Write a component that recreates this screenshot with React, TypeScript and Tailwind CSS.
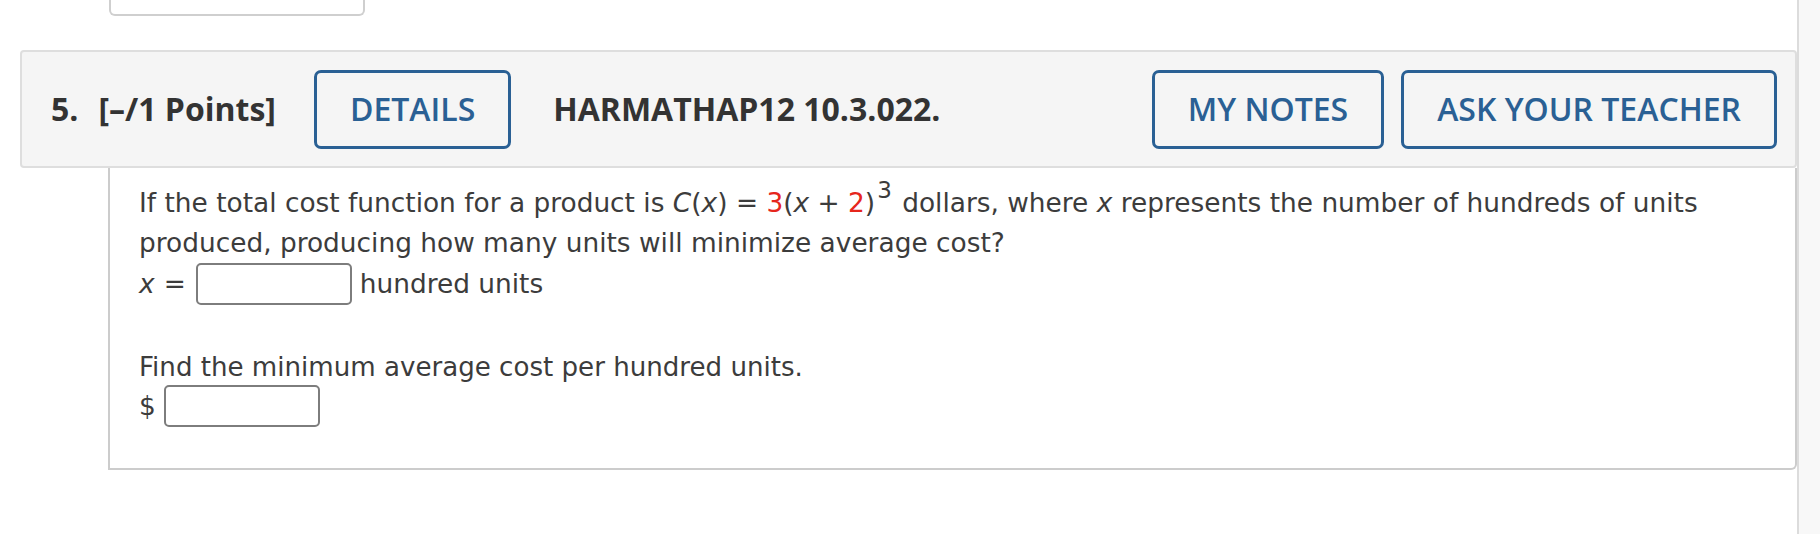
import React from "react";

const blueBtn =
  "flex h-[79px] items-center rounded-[7px] border-[3px] border-[#2a6094] px-[33px] text-[32px] font-semibold text-[#2a6094]";

function AnswerBox({ className = "" }: { className?: string }) {
  return (
    <span
      className={`inline-block h-[42px] w-[156px] rounded-[5px] border-2 border-[#7d7d7d] bg-white ${className}`}
    />
  );
}

export default function App() {
  return (
    <div className="flex h-[534px] w-[1820px] overflow-hidden bg-white">
      <div className="w-[1797px] shrink-0">
        {/* bottom edge of the previous question's field */}
        <div className="ml-[109px] h-[16px] w-[256px] rounded-b-[6px] border-2 border-t-0 border-[#cfcfcf]" />

        {/* question header */}
        <div
          className="ml-[20px] mt-[34px] flex h-[118px] w-[1777px] items-center rounded-[4px] border-2 border-[#dedede] bg-[#f5f5f5] pl-[29px] text-[#333]"
          style={{ fontFamily: '"Open Sans", sans-serif' }}
        >
          <span className="text-[32px] font-bold">5.</span>
          <span className="ml-[20px] text-[32px] font-bold">[–/1 Points]</span>
          <button className={`${blueBtn} ml-[38px]`}>DETAILS</button>
          <span className="ml-[42px] text-[32px] font-bold">HARMATHAP12 10.3.022.</span>
          <div className="ml-auto mr-[18px] flex gap-[17px]">
            <button className={blueBtn}>MY NOTES</button>
            <button className={blueBtn}>ASK YOUR TEACHER</button>
          </div>
        </div>

        {/* question body */}
        <div
          className="ml-[108px] h-[302px] w-[1689px] rounded-br-[6px] border-b-2 border-l-2 border-r-2 border-[#cccccc] pl-[29px] pt-[15px] text-[26.4px] leading-[40px] text-[#3c3c3c]"
          style={{ fontFamily: '"DejaVu Sans", Verdana, sans-serif' }}
        >
          <p className="whitespace-nowrap">
            If the total cost function for a product is <i>C</i>(<i>x</i>) ={" "}
            <span className="text-[#e6261c]">3</span>(<i>x</i> +{" "}
            <span className="text-[#e6261c]">2</span>)
            <sup className="relative top-[-4px] ml-[2px] mr-[2px] align-super text-[23px] leading-none">3</sup> dollars, where{" "}
            <i>x</i> represents the number of hundreds of units
            <br />
            produced, producing how many units will minimize average cost?
          </p>
          <div className="flex h-[41px] items-center whitespace-nowrap">
            <i>x</i>
            <span className="ml-[9px]">=</span>
            <AnswerBox className="ml-[10px]" />
            <span className="ml-[8px]">hundred units</span>
          </div>
          <p className="mt-[43px] text-[26.1px]">Find the minimum average cost per hundred units.</p>
          <div className="-mt-[2px] flex h-[42px] items-center">
            <span>$</span>
            <AnswerBox className="ml-[8px]" />
          </div>
        </div>
      </div>
      <div className="w-[23px] border-l-2 border-[#dcdcdc] bg-[#f8f8f8]" />
    </div>
  );
}
